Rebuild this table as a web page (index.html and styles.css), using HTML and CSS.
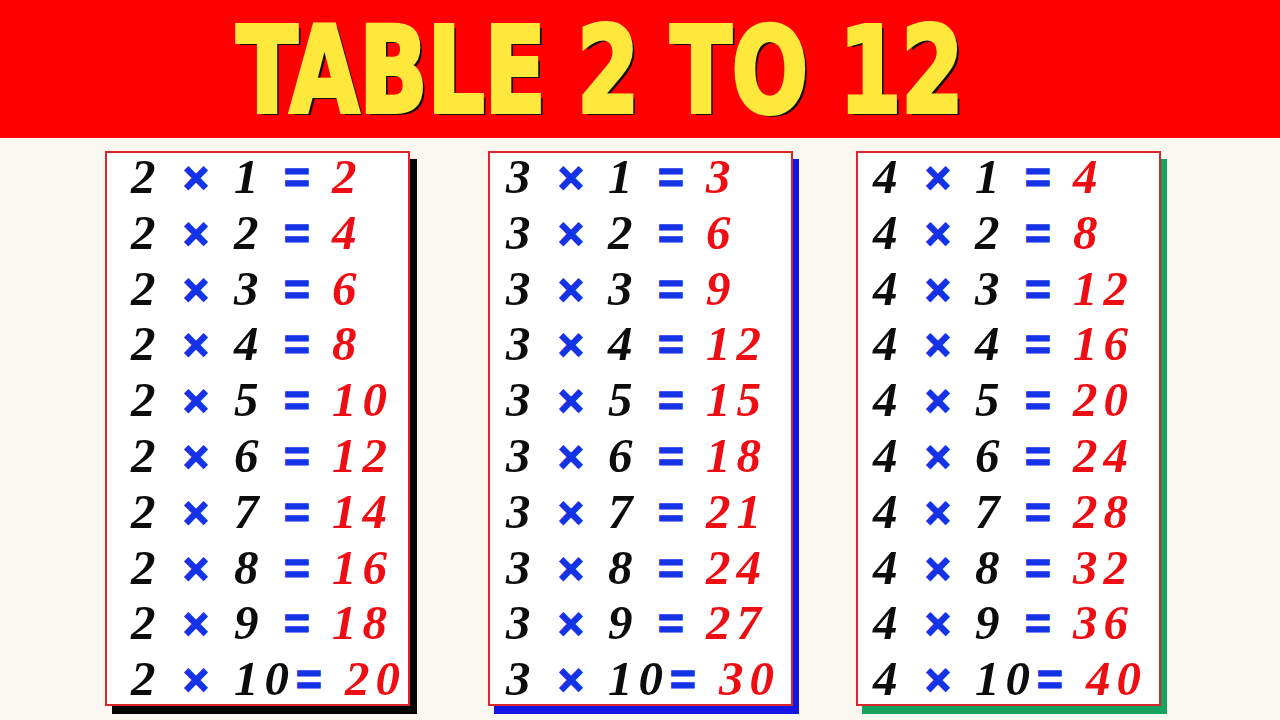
FILE: index.html
```html
<!DOCTYPE html>
<html lang="en">
<head>
<meta charset="utf-8">
<title>Table 2 to 12</title>
<link rel="stylesheet" href="styles.css">
</head>
<body>
<header class="banner">
  <h1 class="title"><span class="title-text">TABLE 2 TO 12</span></h1>
</header>
<main class="tables">
  <section class="card card-black">
    <div class="row"><span class="a">2</span><span class="op">×</span><span class="b">1</span><span class="eq">=</span><span class="r">2</span></div>
    <div class="row"><span class="a">2</span><span class="op">×</span><span class="b">2</span><span class="eq">=</span><span class="r">4</span></div>
    <div class="row"><span class="a">2</span><span class="op">×</span><span class="b">3</span><span class="eq">=</span><span class="r">6</span></div>
    <div class="row"><span class="a">2</span><span class="op">×</span><span class="b">4</span><span class="eq">=</span><span class="r">8</span></div>
    <div class="row"><span class="a">2</span><span class="op">×</span><span class="b">5</span><span class="eq">=</span><span class="r">10</span></div>
    <div class="row"><span class="a">2</span><span class="op">×</span><span class="b">6</span><span class="eq">=</span><span class="r">12</span></div>
    <div class="row"><span class="a">2</span><span class="op">×</span><span class="b">7</span><span class="eq">=</span><span class="r">14</span></div>
    <div class="row"><span class="a">2</span><span class="op">×</span><span class="b">8</span><span class="eq">=</span><span class="r">16</span></div>
    <div class="row"><span class="a">2</span><span class="op">×</span><span class="b">9</span><span class="eq">=</span><span class="r">18</span></div>
    <div class="row row-ten"><span class="a">2</span><span class="op">×</span><span class="b">10</span><span class="eq">=</span><span class="r">20</span></div>
  </section>
  <section class="card card-blue">
    <div class="row"><span class="a">3</span><span class="op">×</span><span class="b">1</span><span class="eq">=</span><span class="r">3</span></div>
    <div class="row"><span class="a">3</span><span class="op">×</span><span class="b">2</span><span class="eq">=</span><span class="r">6</span></div>
    <div class="row"><span class="a">3</span><span class="op">×</span><span class="b">3</span><span class="eq">=</span><span class="r">9</span></div>
    <div class="row"><span class="a">3</span><span class="op">×</span><span class="b">4</span><span class="eq">=</span><span class="r">12</span></div>
    <div class="row"><span class="a">3</span><span class="op">×</span><span class="b">5</span><span class="eq">=</span><span class="r">15</span></div>
    <div class="row"><span class="a">3</span><span class="op">×</span><span class="b">6</span><span class="eq">=</span><span class="r">18</span></div>
    <div class="row"><span class="a">3</span><span class="op">×</span><span class="b">7</span><span class="eq">=</span><span class="r">21</span></div>
    <div class="row"><span class="a">3</span><span class="op">×</span><span class="b">8</span><span class="eq">=</span><span class="r">24</span></div>
    <div class="row"><span class="a">3</span><span class="op">×</span><span class="b">9</span><span class="eq">=</span><span class="r">27</span></div>
    <div class="row row-ten"><span class="a">3</span><span class="op">×</span><span class="b">10</span><span class="eq">=</span><span class="r">30</span></div>
  </section>
  <section class="card card-green">
    <div class="row"><span class="a">4</span><span class="op">×</span><span class="b">1</span><span class="eq">=</span><span class="r">4</span></div>
    <div class="row"><span class="a">4</span><span class="op">×</span><span class="b">2</span><span class="eq">=</span><span class="r">8</span></div>
    <div class="row"><span class="a">4</span><span class="op">×</span><span class="b">3</span><span class="eq">=</span><span class="r">12</span></div>
    <div class="row"><span class="a">4</span><span class="op">×</span><span class="b">4</span><span class="eq">=</span><span class="r">16</span></div>
    <div class="row"><span class="a">4</span><span class="op">×</span><span class="b">5</span><span class="eq">=</span><span class="r">20</span></div>
    <div class="row"><span class="a">4</span><span class="op">×</span><span class="b">6</span><span class="eq">=</span><span class="r">24</span></div>
    <div class="row"><span class="a">4</span><span class="op">×</span><span class="b">7</span><span class="eq">=</span><span class="r">28</span></div>
    <div class="row"><span class="a">4</span><span class="op">×</span><span class="b">8</span><span class="eq">=</span><span class="r">32</span></div>
    <div class="row"><span class="a">4</span><span class="op">×</span><span class="b">9</span><span class="eq">=</span><span class="r">36</span></div>
    <div class="row row-ten"><span class="a">4</span><span class="op">×</span><span class="b">10</span><span class="eq">=</span><span class="r">40</span></div>
  </section>
</main>
</body>
</html>
```

FILE: styles.css
```css
html, body {
  margin: 0;
  padding: 0;
}

body {
  width: 1280px;
  height: 720px;
  overflow: hidden;
  background: #fbf8f1;
  font-family: "Liberation Serif", "Times New Roman", serif;
}

.banner {
  height: 138px;
  background: #fe0000;
  display: flex;
  justify-content: center;
  align-items: flex-start;
  padding-right: 80px;
  box-sizing: border-box;
}

.title {
  margin: 0;
  padding-top: 4px;
  font-family: "DejaVu Sans Condensed", "DejaVu Sans", sans-serif;
  font-stretch: condensed;
  font-weight: 700;
  font-size: 120px;
  line-height: 134px;
  color: #ffe83c;
  white-space: nowrap;
}

.title-text {
  display: inline-block;
  transform: scaleX(0.83);
  -webkit-text-stroke: 4px #ffe83c;
  text-shadow: 4px 3px 0 #111;
}

.tables {
  display: flex;
  align-items: flex-start;
  padding-left: 105px;
  padding-top: 13px;
}

.card {
  width: 305px;
  height: 555px;
  box-sizing: border-box;
  background: #ffffff;
  border: 2px solid #d9262c;
  padding-left: 15px;
  display: grid;
  grid-template-rows: repeat(10, 55.8px);
  align-content: start;
}

.card-black {
  box-shadow: 7px 8px 0 #050505;
  padding-left: 24px;
}

.card-blue {
  margin-left: 78px;
  box-shadow: 6px 8px 0 #1515e6;
  padding-left: 16px;
}

.card-green {
  margin-left: 63px;
  box-shadow: 6px 8px 0 #17a35f;
}

.row {
  display: flex;
  align-items: baseline;
  height: 55.8px;
  line-height: 48px;
  font-size: 49px;
  font-weight: 700;
  font-style: italic;
}

.a, .b, .r {
  letter-spacing: 6px;
}

.a {
  width: 52px;
  color: #0c0c0c;
}

.b {
  width: 50px;
  color: #0c0c0c;
}

.r {
  color: #ee0d12;
}

.op, .eq {
  font-family: "Liberation Sans", Arial, sans-serif;
  font-style: normal;
  font-weight: 700;
  font-size: 44px;
  color: #1432e6;
  -webkit-text-stroke: 1.5px #1432e6;
}

.op {
  width: 50px;
}

.eq {
  width: 48px;
}

.card-black .op {
  width: 51px;
}

.row-ten .b {
  width: 62px;
}

.row-ten .eq {
  width: 49px;
}
```
